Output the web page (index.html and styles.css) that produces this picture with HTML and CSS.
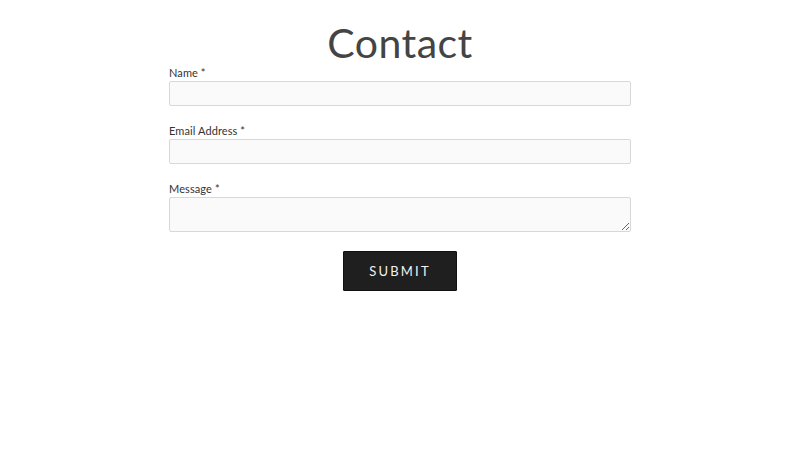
FILE: index.html
```html
<!DOCTYPE html>
<html lang="en">
<head>
<meta charset="utf-8">
<title>Contact</title>
<link rel="stylesheet" href="styles.css">
</head>
<body>
<main class="page">
  <h1 class="title">Contact</h1>
  <form class="contact-form">
    <div class="field">
      <label class="label" for="name">Name *</label>
      <input class="input" id="name" type="text">
    </div>
    <div class="field">
      <label class="label" for="email">Email Address *</label>
      <input class="input" id="email" type="email">
    </div>
    <div class="field">
      <label class="label" for="message">Message *</label>
      <textarea class="input textarea" id="message"></textarea>
    </div>
    <div class="actions">
      <button class="submit" type="submit">Submit</button>
    </div>
  </form>
</main>
</body>
</html>
```
FILE: styles.css
```css
* {
  box-sizing: border-box;
}

body {
  margin: 0;
  background: #ffffff;
  font-family: Lato, "Noto Sans", "Liberation Sans", sans-serif;
  color: #333333;
}

.page {
  width: 462px;
  margin: 0 auto;
  padding-top: 20px;
}

.title {
  margin: 0;
  font-size: 41px;
  line-height: 45px;
  font-weight: 400;
  text-align: center;
  color: #444444;
  letter-spacing: 0.5px;
}

.contact-form {
  display: flex;
  flex-direction: column;
  gap: 17px;
}

.field {
  display: flex;
  flex-direction: column;
  gap: 3px;
}

.label {
  font-size: 11px;
  line-height: 13px;
  padding-top: 1px;
  margin-bottom: -1px;
  color: #333333;
  letter-spacing: 0.1px;
}

.input {
  display: block;
  width: 100%;
  height: 25px;
  margin: 0;
  padding: 4px 8px;
  background: #fafafa;
  border: 1px solid #d8d8d8;
  border-radius: 2px;
  font: inherit;
  font-size: 12px;
  outline: none;
}

.textarea {
  height: 35px;
  resize: vertical;
}

.actions {
  display: flex;
  justify-content: center;
  padding-top: 2px;
}

.submit {
  width: 114px;
  height: 40px;
  background: #1f1f1f;
  color: #f2f2f2;
  border: 1px solid #111111;
  border-radius: 1px;
  font-family: inherit;
  font-size: 13px;
  letter-spacing: 2.2px;
  text-transform: uppercase;
  cursor: pointer;
}
```
